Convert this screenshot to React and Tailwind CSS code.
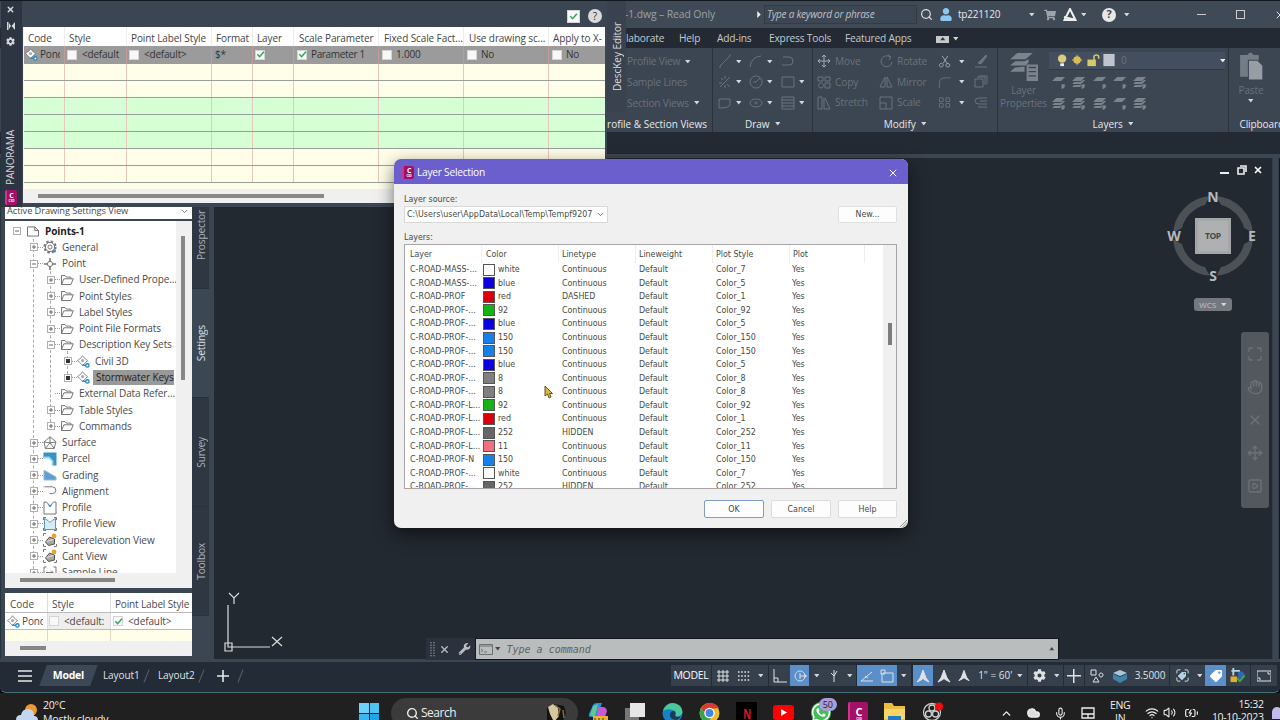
import {
  BatteryCharging,
  ChevronDown,
  ChevronUp,
  Cloud,
  Hand,
  Maximize,
  Mic,
  Move,
  Search,
  SquarePlay,
  Volume2,
  Wifi,
  X,
} from "lucide-react";
import { FaCog, FaShoppingCart, FaTag, FaUser, FaWhatsapp, FaWrench } from "react-icons/fa";

const DIALOG_ROWS = [
  ["C-ROAD-MASS-...", "white", "Continuous", "Color_7"],
  ["C-ROAD-MASS-...", "blue", "Continuous", "Color_5"],
  ["C-ROAD-PROF", "red", "DASHED", "Color_1"],
  ["C-ROAD-PROF-...", "92", "Continuous", "Color_92"],
  ["C-ROAD-PROF-...", "blue", "Continuous", "Color_5"],
  ["C-ROAD-PROF-...", "150", "Continuous", "Color_150"],
  ["C-ROAD-PROF-...", "150", "Continuous", "Color_150"],
  ["C-ROAD-PROF-...", "blue", "Continuous", "Color_5"],
  ["C-ROAD-PROF-...", "8", "Continuous", "Color_8"],
  ["C-ROAD-PROF-...", "8", "Continuous", "Color_8"],
  ["C-ROAD-PROF-L...", "92", "Continuous", "Color_92"],
  ["C-ROAD-PROF-L...", "red", "Continuous", "Color_1"],
  ["C-ROAD-PROF-L...", "252", "HIDDEN", "Color_252"],
  ["C-ROAD-PROF-L...", "11", "Continuous", "Color_11"],
  ["C-ROAD-PROF-N", "150", "Continuous", "Color_150"],
  ["C-ROAD-PROF-...", "white", "Continuous", "Color_7"],
  ["C-ROAD-PROF-...", "252", "HIDDEN", "Color_252"],
];

const SWATCHES = {
  white: "bg-white",
  blue: "bg-[#0a00e0]",
  red: "bg-[#dc0008]",
  92: "bg-[#14b414]",
  150: "bg-[#1482ea]",
  8: "bg-[#808080]",
  252: "bg-[#666666]",
  11: "bg-[#f07080]",
};

const TREE = [
  [1, "General", "+", "gear"],
  [1, "Point", "-", "point"],
  [2, "User-Defined Prope...", "+", "folder"],
  [2, "Point Styles", "+", "folder"],
  [2, "Label Styles", "+", "folder"],
  [2, "Point File Formats", "+", "folder"],
  [2, "Description Key Sets", "-", "folder"],
  [3, "Civil 3D", "o", "key"],
  [3, "Stormwater Keys", "o", "key"],
  [2, "External Data Refer...", "", "folder"],
  [2, "Table Styles", "+", "folder"],
  [2, "Commands", "+", "folder"],
  [1, "Surface", "+", "surface"],
  [1, "Parcel", "+", "parcel"],
  [1, "Grading", "+", "grading"],
  [1, "Alignment", "+", "alignment"],
  [1, "Profile", "+", "profile"],
  [1, "Profile View", "+", "profileView"],
  [1, "Superelevation View", "+", "section"],
  [1, "Cant View", "+", "section"],
  [1, "Sample Line", "+", "sample"],
];

const PANORAMA_COLUMNS = [
  ["Code", "w-[41px] pl-1"],
  ["Style", "w-[62px] pl-1"],
  ["Point Label Style", "w-[85px] pl-1"],
  ["Format", "w-[41px] pl-1"],
  ["Layer", "w-[41px] pl-1"],
  ["Scale Parameter", "w-[85px] pl-[5px]"],
  ["Fixed Scale Fact...", "w-[85px] pl-[5px]"],
  ["Use drawing sc...", "w-[85px] pl-[5px]"],
  ["Apply to X-", "w-[57px] pl-1"],
];

const PANORAMA_ROWS = [
  "bg-[#fffee8]",
  "bg-[#fffee8]",
  "bg-[#d6ffd6]",
  "bg-[#d6ffd6]",
  "bg-[#d6ffd6]",
  "bg-[#fffee8]",
  "bg-[#fffee8]",
];

function Caret({ className = "text-[#d5d8db]" }) {
  return (
    <svg viewBox="0 0 6 4" className={`h-[3.5px] w-[5.5px] shrink-0 ${className}`}>
      <path d="M0 0h6L3 4z" fill="currentColor" />
    </svg>
  );
}

function Civil({ className }) {
  return (
    <div
      className={`flex shrink-0 flex-col items-center justify-center rounded-[2px] border-l-2 border-[#d0348c] bg-[#a3106a] font-bold leading-none text-white ${className}`}
    >
      C<span className="text-[3px] leading-[4px]">C3D</span>
    </div>
  );
}

function Check({ on, className = "" }) {
  return (
    <span
      className={`flex h-[10px] w-[10px] shrink-0 items-center justify-center border border-[#d4d4d4] bg-[#f8f8f8] ${className}`}
    >
      {on && (
        <svg viewBox="0 0 10 10" className="h-[9px] w-[9px] shrink-0">
          <path d="M1.5 4.8 4 7.4 8.8 2" fill="none" stroke="#2fa65a" strokeWidth="1.7" />
        </svg>
      )}
    </span>
  );
}

function KeyIcon() {
  return (
    <svg viewBox="0 0 14 14" className="h-[13px] w-[13px] shrink-0">
      <path
        d="M4.5 3 6 .8 7.6 3 9.5 4.6 11.5 6 9.5 7.6 7.6 9.6 6 11.4 4.5 9.6 2.4 7.6.5 6l1.9-1.4z"
        fill="#fff"
        stroke="#777"
        strokeWidth=".9"
      />
      <circle cx="6" cy="6" r="1.7" fill="#aaa" />
      <circle cx="11.2" cy="11.2" r="1.8" fill="#fff" stroke="#2385c6" strokeWidth="1.4" />
      <path d="M5.5 11h4" stroke="#2385c6" strokeWidth="1.5" />
    </svg>
  );
}

function TreeIcon({ type }) {
  if (type === "key") return <KeyIcon />;
  return (
    <svg
      viewBox="0 0 14 14"
      className="h-[14px] w-[14px] shrink-0"
      fill="none"
      stroke="#777"
      strokeWidth="1"
    >
      {type === "folder" && (
        <path d="M1.5 11.5v-9h3.5l1.3 1.6h4.5v1.7M1.5 11.5l2.4-5.7h9.4l-2.4 5.7z" />
      )}
      {type === "gear" && (
        <>
          <circle cx="7" cy="7" r="5.6" strokeWidth="2" strokeDasharray="2.4 2" />
          <circle cx="7" cy="7" r="4.6" />
          <circle cx="7" cy="7" r="2" />
          <circle cx="11.5" cy="11" r="1.6" fill="#3d94cf" stroke="none" />
        </>
      )}
      {type === "point" && (
        <>
          <circle cx="7" cy="7" r="2.6" />
          <path d="M7 1v3.4M7 9.6V13M1 7h3.4M9.6 7H13" strokeWidth="1.6" />
        </>
      )}
      {type === "surface" && (
        <path d="m7 .8 6 5-1.800 6.600H2.400L1 6zM7 .8v6L1 6M7 6.800 13 6M7 6.800l-4.600 5.600M7 6.800l4.200 5.600" />
      )}
      {type === "parcel" && (
        <>
          <path d="M.5 .5h13v13H9.800V8.800L7 6H.5z" fill="#3793c0" stroke="none" />
          <path d="M.5 5.500h5.500l3.500 3.500v4.500" stroke="#9cd7ef" strokeWidth="1.8" />
        </>
      )}
      {type === "grading" && (
        <path d="M1 2.200 13 9v3H1z" fill="#609ccc" stroke="#8fbce0" />
      )}
      {type === "alignment" && <path d="M2 2.800h7.200q3.600 0 3.600 3.400t-3.600 3.400H6.600M.5 2.800h1" />}
      {type === "profile" && (
        <>
          <path d="M1 1h2.500L7 5l3.500-4H13v12H1z" />
          <path d="M5 3.200 7 6l2-2.800" stroke="#3d94cf" />
        </>
      )}
      {type === "profileView" && (
        <>
          <path d="M1.500 1.500 5 3.500l2 2 2-2 3.500-2v11h-11z" fill="#d5ebf5" stroke="#5d96b8" />
          <path d="M.5 3V.5H3M11 .5h2.500V3M.5 11v2.500H3M11 13.500h2.500V11" />
        </>
      )}
      {type === "section" && (
        <>
          <path d="M.5 3V.5H3M.5 11v2.500H3M11 13.500h2.500V11" />
          <path d="m2.500 9 4-5 5 2v5l-6 1.500z" fill="#a7a7a2" stroke="#57534c" />
          <path d="m3.500 8.500 7-2" stroke="#e8e7e3" />
          <circle cx="11" cy="2.900" r="2.400" fill="#e6a527" stroke="none" />
        </>
      )}
      {type === "sample" && (
        <path d="M3.500 1H1v12h2.500M10.500 1H13v12h-2.500M3 6.500h7M8 4.500l2 2-2 2" />
      )}
    </svg>
  );
}

function Expander({ kind }) {
  return (
    <svg viewBox="0 0 8 8" className="h-2 w-2 shrink-0">
      {kind && <rect x=".5" y=".5" width="7" height="7" fill="#fff" stroke="#b0b0b0" />}
      {kind === "o" ? (
        <rect x="2" y="2" width="4" height="4" fill="#333" />
      ) : (
        kind && <path d={kind === "+" ? "M2 4h4M4 2v4" : "M2 4h4"} stroke="#666" />
      )}
    </svg>
  );
}

function TreeRow({ row }) {
  const [level, label, expander, icon] = row;
  const indent = level === 1 ? "pl-[25px]" : level === 2 ? "pl-[42px]" : "pl-[59px]";
  const selected = label === "Stormwater Keys";
  return (
    <div className={`flex h-[16.28px] shrink-0 items-center ${indent}`}>
      <Expander kind={expander} />
      <span className="w-[5px] shrink-0 border-t border-dotted border-[#999]" />
      <TreeIcon type={icon} />
      <span
        className={`ml-[3px] h-[15px] whitespace-nowrap pl-[2px] leading-[15px] ${
          selected ? "w-[81px] bg-[#999] pl-[3px] text-[#222]" : ""
        }`}
      >
        {label}
      </span>
    </div>
  );
}

function ToolGlyph({ d, fill = "none", className = "h-[14px] w-[14px]" }) {
  return (
    <svg viewBox="0 0 14 14" className={`shrink-0 ${className}`} fill={fill} stroke="currentColor">
      <path d={d} />
    </svg>
  );
}

function RibbonPanel({ title, className, caret = true, align = "justify-center", children }) {
  return (
    <section className={`flex shrink-0 flex-col border-r border-[#2a323c] ${className}`}>
      <div className="h-[68px]">{children}</div>
      <div className={`flex h-[16px] items-center gap-[5px] whitespace-nowrap text-[10px] text-[#e6e9ec] ${align}`}>
        {title}
        {caret && <Caret />}
      </div>
    </section>
  );
}

const DRAW_TOOLS = [
  ["M2 12 12 2M1 13h2M11 1h2", "M1 13Q2 3 12 2", "M2 3h6q4 0 4 4t-4 4H1"],
  ["M2 12 12 2M3 3l2 2M7 1v3M1 8h3M9 9l3 3M7 10v3", "M7 1a6 6 0 1 0 .1 0M7 7l4-4M4 7h3", "M1 2h12v10H1z"],
  ["M1 3h11v5q0 4-11 4z", "M7 3a6 4 0 1 0 .1 0M7 6a1 1 0 1 0 .1 0", "M1 1h12v12H1zM1 4h12M1 7h12M1 10h12"],
];

const MODIFY_TOOLS = [
  ["M7 1v12M1 7h12M5 3l2-2 2 2M5 11l2 2 2-2M3 5 1 7l2 2M11 5l2 2-2 2", "Move", "M11 3a5.5 5.5 0 1 0 2 5M9 1l3 2-2 3", "Rotate", "M4 1l6 9M10 1 5 9M3 9a2 2 0 1 0 .1 0M10 9a2 2 0 1 0 .1 0", "M4 9 12 1l1 1-6 8zM1 13h12"],
  ["M1 2h5v4H1zM8 2h5v4H8zM4 8a2.5 2.5 0 1 0 .1 0M8 8h5v5H8z", "Copy", "M6 2v10H1zM8 2v10h5z", "Mirror", "M1 13V8q0-6 6-6h6", "M1 4h8v8H1zM3 2h8v8M5 1h8v8"],
  ["M1 1h4v12H1zM7 2v11h6L8 2", "Stretch", "M1 1h12v12H1zM1 7h6v6", "Scale", "M1 2h4v4H1zM8 2h4v4H8zM1 8h4v4H1zM8 8h4v4H8z", "M13 2H5Q1 2 1 5t4 3h8M13 5H6M13 11H4"],
];

function LayerGlyph({ index }) {
  return (
    <svg viewBox="0 0 14 14" className="h-[14px] w-[20.3px] shrink-0" fill="#7b838c">
      <path d="M4 2h9l-4 4H0z" />
      {index % 3 !== 0 && <path d="m2 7-2 2h9l4-4h-2L8 7zM2 10l-2 2h8l4-3h-2l-3 1z" />}
      <path d="M9 9h4v3l-2 2H9z" stroke="#3c4552" strokeWidth=".6" />
    </svg>
  );
}

function Ribbon() {
  return (
    <div className="flex h-[84px] shrink-0 bg-[#3c4552] pl-[609px] text-[#69727d]">
      <RibbonPanel title="Profile & Section Views" caret={false} align="justify-end pr-[5px]" className="w-[104px]">
        <div className="flex flex-col pl-[18px] pt-[3px] text-[10.2px] leading-[20.8px] tracking-[-0.2px] whitespace-nowrap">
          <div className="flex items-center gap-[5px]">Profile View <Caret /></div>
          <div>Sample Lines</div>
          <div className="flex items-center gap-[5px]">Section Views <Caret /></div>
        </div>
      </RibbonPanel>
      <RibbonPanel title="Draw" className="w-[100px]">
        <div className="pt-[3px] pl-[5px]">
          {DRAW_TOOLS.map((row, i) => (
            <div key={i} className="flex h-[20.8px] items-center">
              {row.map((d, j) => (
                <div key={j} className="flex w-[32.5px] items-center gap-[4px]">
                  <ToolGlyph d={d} />
                  {!(i === 0 && j === 2) && <Caret />}
                </div>
              ))}
            </div>
          ))}
        </div>
      </RibbonPanel>
      <RibbonPanel title="Modify" className="w-[185px]">
        <div className="pt-[3px] pl-[4px] text-[10.2px] tracking-[-0.15px]">
          {MODIFY_TOOLS.map((row, i) => (
            <div key={i} className="flex h-[20.8px] items-center">
              <ToolGlyph d={row[0]} className={i === 0 ? "h-[14px] w-[14px] text-[#a5abb2]" : "h-[14px] w-[14px]"} />
              <span className="ml-1 w-[44px]">{row[1]}</span>
              <ToolGlyph d={row[2]} />
              <span className="ml-1 w-[41px]">{row[3]}</span>
              <ToolGlyph d={row[4]} className={i === 0 ? "h-[13px] w-[14px] text-[#a5abb2]" : "h-[13px] w-[14px]"} />
              <span className="ml-[7px] w-[15px]"><Caret /></span>
              <ToolGlyph d={row[5]} fill={i === 0 ? "currentColor" : "none"} />
            </div>
          ))}
        </div>
      </RibbonPanel>
      <RibbonPanel title="Layers" className="w-[231px]">
        <div className="flex pt-1">
          <div className="flex w-[51px] shrink-0 flex-col items-center text-[10px] leading-[13px] tracking-[-0.15px]">
            <svg viewBox="0 0 28 28" className="h-[29px] w-[29px]" fill="#7b838c">
              <path d="M8 1h15l-7 6H1zM6 9l-5 4h15l3-3v-3l-4 2zM6 15l-5 4h14v-5zM17 12h11v16H17z" />
              <path d="M19 15h7M19 19h7M19 23h7" stroke="#3c4552" strokeWidth="1.3" />
            </svg>
            <span className="mt-[3px]">Layer</span>
            <span>Properties</span>
          </div>
          <div className="w-[176px]">
            <div className="flex h-[18px] items-center border-b border-[#2f3843] bg-[#434f5e] pl-[7px] text-[10px]">
              <svg viewBox="0 0 62 16" className="h-[15px] w-[61px]">
                <circle cx="5" cy="6" r="4.5" fill="#d9cc7f" />
                <path d="M3 11h4v3H3z" fill="#eee" />
                <circle cx="21" cy="7.5" r="4" fill="#d6bd55" />
                <path d="M21 2v11M15.500 7.500h11" stroke="#d6bd55" />
                <path d="M32 7h9v7h-9z" fill="#d6c968" />
                <path d="M39 8V4q0-2 2.500-2T44 4v2" fill="none" stroke="#d6c968" strokeWidth="1.6" />
                <path d="M49 1h12v13H49z" fill="#bdc4cf" />
              </svg>
              <span className="ml-1 grow">0</span>
              <Caret className="text-[#eee]" />
            </div>
            {[0, 1].map((r) => (
              <div key={r} className="flex h-[21px] items-center pt-[3px]">
                {[0, 1, 3, 3, 4].map((n, i) => (
                  <LayerGlyph key={i} index={r && i !== 3 ? 1 : n} />
                ))}
              </div>
            ))}
          </div>
        </div>
      </RibbonPanel>
      <div className="flex w-[52px] shrink-0 flex-col overflow-hidden pl-[10.500px] text-[10px] tracking-[-0.1px]">
        <div className="flex h-[68px] w-[23px] flex-col items-center pt-1">
          <svg viewBox="0 0 22 28" className="h-[29px] w-[23px] shrink-0" fill="#747c85">
            <path d="M0 3h7q3-5 6 0h5v21H0z" />
            <path d="M8 8h9l5 5v14H8z" fill="#969da4" stroke="#3c4552" />
          </svg>
          <span className="mb-[2px] mt-[3px] leading-[13px]">Paste</span>
          <Caret />
        </div>
        <span className="whitespace-nowrap leading-[16px] text-[#e6e9ec]">Clipboard</span>
      </div>
    </div>
  );
}

function TitleBar() {
  return (
    <div className="flex h-[28px] shrink-0 items-center border-t border-[#111820] bg-[#404a57] pl-[625px] text-[10px] text-[#e4e7ea] [&>*]:shrink-0">
      <span className="w-[132px] whitespace-nowrap text-[10.4px] text-[#9aa1a9] tracking-[-0.1px]">-1.dwg – Read Only</span>
      <svg viewBox="0 0 4 8" className="mr-[3px] h-[7px] w-[4px]">
        <path d="M0 0v8l4-4z" fill="#eee" />
      </svg>
      <div className="flex h-[19px] w-[153px] items-center border border-[#323b46] bg-[#3d4653] pl-[2px] whitespace-nowrap italic tracking-[-0.25px] text-[#bcc1c6]">
        Type a keyword or phrase
      </div>
      <Search className="ml-[3px] h-[13px] w-[13px] text-[#d8dbde]" strokeWidth={2.3} />
      <FaUser className="ml-[6px] h-[13px] w-[14px] text-[#8ac8ef]" />
      <span className="ml-[5px] w-[71px] tracking-[-0.2px]">tp221120</span>
      <Caret />
      <FaShoppingCart className="ml-[9px] h-[12px] w-[12px] text-[#9da3a9]" />
      <svg viewBox="0 0 14 14" className="ml-[7px] h-[14px] w-[14px]" fill="none" stroke="#eee" strokeWidth="2">
        <path d="M7 1 1.500 12h11zM1 9l12 3" />
      </svg>
      <span className="ml-[4px]"><Caret /></span>
      <span className="ml-[16px] flex h-[14px] w-[14px] items-center justify-center rounded-full bg-[#e8e8e8] text-[11px] font-bold text-[#444b54]">?</span>
      <span className="ml-[8px]"><Caret /></span>
      <span className="ml-[67px] h-[1.5px] w-[9px] bg-[#ccc]" />
      <span className="ml-[30px] h-[9px] w-[9px] border-[1.5px] border-[#ccc]" />
      <X className="ml-[29px] h-3 w-3" />
    </div>
  );
}

function Panorama() {
  return (
    <div className="absolute left-px top-px flex h-[206px] w-[625px] text-[10px]">
      <div className="flex w-[21px] shrink-0 flex-col items-center bg-[#2e3542] pr-[2px] text-[#d4d7da]">
        <X className="mt-[4px] h-[9px] w-[9px] shrink-0" strokeWidth={4} />
        <svg viewBox="0 0 8 8" className="mt-[8px] h-[8px] w-[8px] shrink-0" fill="#d4d7da">
          <path d="M0 0h1.500v8H0zM8 0v8L4.500 4zM2 1l2 3-2 3z" />
        </svg>
        <FaCog className="mt-[7px] h-[9px] w-[9px] shrink-0" />
        <span className="mt-[79px] h-[60px] shrink-0 rotate-180 text-[10.2px] leading-[15px] tracking-[-0.2px] [writing-mode:vertical-rl]">
          PANORAMA
        </span>
        <Civil className="mt-[5px] h-[15px] w-[12px] text-[7px]" />
      </div>
      <div className="flex w-[585px] shrink-0 flex-col bg-[#3c4552] pb-[4px] pl-px pr-[2px]">
        <div className="flex h-[26px] shrink-0 items-center justify-end pt-[4px] pr-[3px]">
          <Check on className="h-[13px] w-[13px]" />
          <span className="ml-2 flex h-[14px] w-[14px] items-center justify-center rounded-full bg-[#d8dadb] text-[10px] text-[#333]">?</span>
        </div>
        <div className="flex grow flex-col overflow-hidden bg-[#f0f0f0] pl-px text-[#444]">
          <div className="flex h-[19px] shrink-0 bg-white">
            {PANORAMA_COLUMNS.map(([label, cell]) => (
              <span key={label} className={`shrink-0 overflow-hidden whitespace-nowrap border-r border-[#eee] leading-[22px] tracking-[-0.1px] ${cell}`}>
                {label}
              </span>
            ))}
          </div>
          <div className="flex h-[18px] shrink-0 items-center bg-[#9b9b9b] text-[10px] tracking-[-0.2px] text-[#333] whitespace-nowrap [&>*]:border-[#c29a9a] [&>*]:pb-px">
            <div className="flex h-full w-[41px] shrink-0 items-center overflow-hidden border-r pl-[1px]">
              <KeyIcon /><span className="ml-[2px] w-[20px] overflow-hidden">Pond</span>
            </div>
            <div className="flex h-full w-[62px] shrink-0 items-center gap-[5px] overflow-hidden border-r pl-[2px]"><Check />&lt;default</div>
            <div className="flex h-full w-[85px] shrink-0 items-center gap-[5px] border-r pl-[2px]"><Check />&lt;default&gt;</div>
            <div className="flex h-full w-[41px] shrink-0 items-center border-r pl-[3px]">$*</div>
            <div className="flex h-full w-[41px] shrink-0 items-center border-r pl-[2px]"><Check on /></div>
            <div className="flex h-full w-[85px] shrink-0 items-center gap-[4px] border-r pl-[3px] tracking-[-0.35px]"><Check on />Parameter 1</div>
            <div className="flex h-full w-[85px] shrink-0 items-center gap-[4px] border-r pl-[3px]"><Check />1.000</div>
            <div className="flex h-full w-[85px] shrink-0 items-center gap-[4px] border-r pl-[3px]"><Check />No</div>
            <div className="flex h-full w-[57px] shrink-0 items-center gap-[4px] pl-[3px]"><Check />No</div>
          </div>
          {PANORAMA_ROWS.map((bg, i) => (
            <div key={i} className={`flex h-[17px] shrink-0 border-b border-[#999f99] ${bg}`}>
              {PANORAMA_COLUMNS.map(([label, cell]) => (
                <span key={label} className={`shrink-0 border-r border-[#e5c9bd] ${cell}`} />
              ))}
            </div>
          ))}
          <div className="h-[6px] shrink-0 bg-[#fffee8]" />
          <div className="ml-[14px] mt-[5px] h-[4px] w-[286px] shrink-0 bg-[#888]" />
        </div>
      </div>
      <div className="flex h-[111px] w-[19px] items-center justify-center bg-[#39424e] text-[#d9dcdf]">
        <span className="rotate-180 whitespace-nowrap text-[10px] leading-[14px] tracking-[-0.05px] [writing-mode:vertical-rl]">DescKey Editor</span>
      </div>
    </div>
  );
}

const SIDE_TABS = [
  ["Prospector", "h-[82px] items-start pt-[3px]", false],
  ["Settings", "h-[109px] items-center", true],
  ["Survey", "h-[109px] items-center", false],
  ["Toolbox", "h-[109px] items-center", false],
];

function Toolspace() {
  return (
    <aside className="flex w-[214px] shrink-0 border-l border-[#23343c] bg-[#3c4552] pl-[4px] pt-[49px] text-[#4a4a4a]">
      <div className="flex w-[187px] shrink-0 flex-col">
        <div className="flex h-[12px] shrink-0 items-center justify-between bg-white pb-[4px] pl-[2px] pr-[3px] text-[9.3px] leading-none tracking-[-0.1px]">
          Active Drawing Settings View
          <ChevronDown className="h-[9px] w-[9px]" />
        </div>
        <div className="mt-[2px] flex h-[367px] flex-col bg-[#f0f0f0]">
          <div className="flex h-[352px] shrink-0">
            <div className="relative flex w-[171px] flex-col overflow-hidden bg-white pt-[2px] text-[10px] tracking-[-0.1px]">
              <span className="absolute left-[28px] top-[18px] h-[340px] border-l border-dashed border-[#aaa]" />
              <span className="absolute left-[45px] top-[50px] h-[156px] border-l border-dashed border-[#aaa]" />
              <span className="absolute left-[62px] top-[130px] h-[28px] border-l border-dashed border-[#aaa]" />
              <div className="relative flex h-[16.28px] shrink-0 items-center pl-[8px] font-bold text-[#222]">
                <Expander kind="-" />
                <svg viewBox="0 0 14 12" className="ml-[5px] mr-[5px] h-[11px] w-[14px]" fill="none" stroke="#666">
                  <path d="M1 1h8l4 4v6H1zM9 1v4h4" />
                </svg>
                Points-1
              </div>
              <div className="relative flex flex-col">
                {TREE.map((row) => (
                  <TreeRow key={row[1]} row={row} />
                ))}
              </div>
            </div>
            <div className="ml-[5px] mt-[15px] h-[144px] w-[4px] bg-[#888]" />
          </div>
          <div className="ml-[15px] mt-[5px] h-[4px] w-[95px] bg-[#868686]" />
        </div>
        <div className="mt-[5px] flex h-[63px] flex-col bg-[#f0f0f0] text-[10px] whitespace-nowrap">
          <div className="flex h-[20px] shrink-0 border-b border-[#bbb] bg-white leading-[22px]">
            <span className="w-[43px] border-r border-[#ddd] pl-[5px]">Code</span>
            <span className="w-[63px] border-r border-[#ddd] pl-[4px]">Style</span>
            <span className="pl-[4px] tracking-[-0.15px]">Point Label Style</span>
          </div>
          <div className="flex h-[17px] shrink-0 border-b border-[#bbb] bg-white text-[10px] tracking-[-0.1px]">
            <span className="flex w-[43px] items-center overflow-hidden border-r border-[#ddd] pl-[2px]">
              <KeyIcon /><span className="ml-[2px] w-[21px] overflow-hidden">Pond</span>
            </span>
            <span className="flex w-[63px] items-center gap-[5px] overflow-hidden border-r border-[#ddd] bg-[#eee] pl-[1px]">
              <Check className="border-[#aaa]" />&lt;default:
            </span>
            <span className="flex items-center gap-[5px] pl-[2px]"><Check on className="border-[#8a8]" />&lt;default&gt;</span>
          </div>
          <div className="flex h-[11px] shrink-0 bg-[#fffee8]">
            <span className="w-[43px] border-r border-[#e5d5c9]" />
            <span className="w-[63px] border-r border-[#e5d5c9]" />
          </div>
          <div className="ml-[15px] mt-[5px] h-[4px] w-[26px] bg-[#868686]" />
        </div>
      </div>
      <div className="flex w-[17px] shrink-0 flex-col text-[10.200px] tracking-[-0.2px] text-[#aab0b7]">
        {SIDE_TABS.map(([label, size, active]) => (
          <span
            key={label}
            className={`flex justify-center border-b border-[#29313c] ${size} ${
              active ? "bg-[#3c4754] text-[#dde0e3]" : "bg-[#2f3743]"
            }`}
          >
            <span className="rotate-180 leading-[16px] [writing-mode:vertical-rl]">{label}</span>
          </span>
        ))}
      </div>
    </aside>
  );
}

function LayerDialog() {
  return (
    <div className="absolute left-[394px] top-[159px] flex h-[369px] w-[514px] flex-col overflow-hidden rounded-[7px] bg-[#f0f0f0] font-['DejaVu_Sans_Condensed','DejaVu_Sans',sans-serif] text-[8.8px] text-[#454a45] shadow-[0_6px_18px_rgba(0,0,0,0.55)]">
      <div className="flex h-[25px] shrink-0 items-center bg-[#6b5fce] pl-[8px] pr-[9px] pt-[2px] font-['Open_Sans',sans-serif] text-[10.200px] tracking-[-0.25px] text-white">
        <Civil className="mr-[3px] h-[13px] w-[12px] text-[7px]" />
        <span className="grow">Layer Selection</span>
        <X className="h-3 w-3" strokeWidth={2} />
      </div>
      <div className="flex grow flex-col pl-[10px] pr-[11px]">
        <span className="mt-[9px] leading-[12px]">Layer source:</span>
        <div className="mt-px flex justify-between">
          <div className="flex h-[17px] w-[204px] items-center justify-between border border-[#d8d8d8] bg-white pl-[2px] pr-[2px]">
            <span className="w-[187px] overflow-hidden whitespace-nowrap tracking-[0.05px]">C:\Users\user\AppData\Local\Temp\Tempf9207</span>
            <ChevronDown className="h-[9px] w-[9px] shrink-0" />
          </div>
          <div className="flex h-[17px] w-[59px] items-center justify-center rounded-[2px] border border-[#e0e0e0] bg-[#fdfdfd]">New...</div>
        </div>
        <span className="mt-[8px] leading-[12px]">Layers:</span>
        <div className="mt-px flex h-[245px] border border-[#a8a4a8] bg-white">
          <div className="flex w-[478px] flex-col overflow-hidden pl-[5px]">
            <div className="flex h-[18px] shrink-0 leading-[18px] [&>span]:border-r [&>span]:border-[#eee]">
              <span className="w-[72px]">Layer</span>
              <span className="w-[77px] pl-[4px]">Color</span>
              <span className="w-[77px] pl-[3px]">Linetype</span>
              <span className="w-[77px] pl-[3px]">Lineweight</span>
              <span className="w-[77px] pl-[3px]">Plot Style</span>
              <span className="w-[75px] pl-[3px]">Plot</span>
            </div>
            {DIALOG_ROWS.map(([layer, color, linetype, style], i) => (
              <div key={i} className="flex h-[13.57px] shrink-0 items-center whitespace-nowrap">
                <span className="w-[73px]">{layer}</span>
                <span className={`h-[12px] w-[12px] shrink-0 border border-[#555] ${SWATCHES[color]}`} />
                <span className="w-[67px] pl-[3px]">{color}</span>
                <span className="w-[77px]">{linetype}</span>
                <span className="w-[77px]">Default</span>
                <span className="w-[76px]">{style}</span>
                <span>Yes</span>
              </div>
            ))}
          </div>
          <div className="flex grow justify-center bg-[#f0f0f0]">
            <span className="mt-[78px] h-[22px] w-[4px] bg-[#7c7c7c]" />
          </div>
        </div>
        <div className="mt-[11px] flex justify-end gap-[7px] [&>div]:pt-px">
          <div className="flex h-[18px] w-[60px] items-center justify-center rounded-[2px] border border-[#7f9dc4] bg-[#fdfdfd]">OK</div>
          <div className="flex h-[18px] w-[60px] items-center justify-center rounded-[2px] border border-[#dcdcdc] bg-[#fdfdfd]">Cancel</div>
          <div className="flex h-[18px] w-[59px] items-center justify-center rounded-[2px] border border-[#dcdcdc] bg-[#fdfdfd]">Help</div>
        </div>
      </div>
      <svg viewBox="0 0 10 10" className="absolute bottom-0 right-0 h-[9px] w-[9px]">
        <path d="m1 9 8-8M4 9l5-5M7 9l2-2" stroke="#888" />
      </svg>
      <svg viewBox="0 0 9 14" className="absolute left-[150px] top-[226px] h-[14px] w-[9px]">
        <path d="M1 1v10l2.500-2L5 13l2-1-1.500-3.500H8.500z" fill="#dcb93c" stroke="#665126" />
      </svg>
    </div>
  );
}

function ViewCube() {
  return (
    <div className="absolute left-[1164px] top-[187px] flex w-[98px] flex-col items-center font-bold text-[#aeb1b3]">
      <svg viewBox="0 0 98 98" className="h-[98px] w-[98px]">
        <circle cx="49" cy="49" r="36" fill="none" stroke="#4c5156" strokeWidth="8" />
        <path d="M49 3 57 18H41zM49 95l8-15H41zM3 49l15-8v16zM95 49l-15-8v16z" fill="#22282f" />
        <rect x="31" y="31" width="36" height="36" fill="#a4a6a7" />
        <rect x="34" y="34" width="30" height="30" fill="#aeb0b1" />
        <g fill="#b6b8ba" textAnchor="middle" fontSize="14" fontFamily="Open Sans" fontWeight="700">
          <text x="49" y="15">N</text>
          <text x="49" y="94">S</text>
          <text x="10" y="54">W</text>
          <text x="88" y="54">E</text>
          <text x="49" y="52" fill="#44484c" fontSize="8.500" textLength="16">TOP</text>
        </g>
      </svg>
      <div className="mt-[13px] flex h-[13px] w-[38px] items-center justify-center gap-[5px] rounded-[3px] bg-[#74797f] text-[8px] font-normal text-[#c0c4c7]">
        WCS <Caret />
      </div>
    </div>
  );
}

function CommandLine() {
  return (
    <div className="absolute left-[426px] top-[638px] flex h-[22px] w-[633px] items-center bg-[#2b323d] text-[#b8bcc0]">
      <svg viewBox="0 0 5 15" className="ml-[4px] h-[15px] w-[5px]" stroke="#aaa" strokeDasharray="1.3 1.3">
        <path d="M1 0v15M4 0v15" />
      </svg>
      <X className="ml-[4px] h-[11px] w-[11px]" strokeWidth={3} />
      <FaWrench className="ml-[8px] h-[12px] w-[13px] -scale-x-100 rotate-90" />
      <div className="ml-[4px] flex h-full grow items-center border border-[#15191f] bg-[#babdbe] pl-[3px] pr-[4px] text-[#5d6265]">
        <svg viewBox="0 0 14 11" className="h-[11px] w-[14px]" fill="none" stroke="#6c7174">
          <path d="M.5.5h13v10H.5zM0 2h14M2 5l2 1.500L2 8M5 8h3" />
        </svg>
        <Caret className="ml-[2px] text-[#444]" />
        <span className="ml-[6px] grow font-['DejaVu_Sans_Mono',monospace] text-[10px] italic">Type a command</span>
        <Caret className="rotate-180 text-[#444]" />
      </div>
    </div>
  );
}

function DrawingArea() {
  return (
    <main className="flex grow border-r border-[#111820] bg-[#222930]">
      <div className="grow" />
      <div className="w-[7px] border-l border-r border-[#333c48] bg-[#3c4552]" />
    </main>
  );
}

function Cell({ className = "", active, children }) {
  return (
    <span
      className={`flex h-[21px] shrink-0 items-center justify-center ${
        active ? "bg-[#5b8fc9]" : "bg-[#36404c]"
      } ${className}`}
    >
      {children}
    </span>
  );
}

const PERSON = "M7 1 8.500 5 10 9l3 4-4-2-2-1.500L5 11l-4 2 3-4 1.500-4z";

function StatusBar() {
  return (
    <div className="flex h-[31px] shrink-0 items-center rounded-b-[6px] border-b border-[#427076] bg-[#232c36] pb-[3px] pl-[18px] text-[10px] text-[#dfe2e5]">
      <div className="flex w-[653px] shrink-0 items-center">
        <svg viewBox="0 0 14 12" className="h-[12px] w-[14px]" stroke="#e6e8ea" strokeWidth="1.7">
          <path d="M0 1h14M0 6h14M0 11h14" />
        </svg>
        <span className="ml-[11px] flex h-[21px] w-[51px] -skew-x-[20deg] items-center justify-center bg-[#3c4856]">
          <b className="skew-x-[20deg] text-[10.500px] tracking-[-0.300px] text-white">Model</b>
        </span>
        <span className="ml-[9px] w-[43px] tracking-[-0.1px]">Layout1</span>
        <span className="h-[14px] w-px rotate-[22deg] bg-[#56606b]" />
        <span className="ml-[11px] w-[43px] tracking-[-0.1px]">Layout2</span>
        <span className="h-[14px] w-px rotate-[22deg] bg-[#56606b]" />
        <svg viewBox="0 0 12 12" className="ml-[15px] h-[12px] w-[12px]" stroke="#e6e8ea" strokeWidth="1.6">
          <path d="M6 0v12M0 6h12" />
        </svg>
        <span className="ml-[11px] h-[14px] w-px rotate-[22deg] bg-[#56606b]" />
      </div>
      <Cell className="w-[40px] text-[10.500px] tracking-[-0.300px] text-white">MODEL</Cell>
      <Cell className="ml-px w-[22px]"><ToolGlyph d="M1 3h12M1 7h12M1 11h12M3 1v12M7 1v12M11 1v12" /></Cell>
      <Cell className="w-[19px]">
        <svg viewBox="0 0 12 12" className="h-[12px] w-[12px]" stroke="currentColor" strokeWidth="1.6" strokeDasharray="1.6 1.6">
          <path d="M0 2h12M0 6h12M0 10h12" />
        </svg>
      </Cell>
      <Cell className="w-[15px]"><Caret /></Cell>
      <Cell className="ml-px w-[21px]"><ToolGlyph d="M1 0v13h13M1 9h4v4" /></Cell>
      <Cell active className="w-[19px]"><ToolGlyph d="M7 2a5 5 0 1 0 .1 0M7 7h7M7 4v6M11 5l2 2-2 2" /></Cell>
      <Cell className="w-[15px]"><Caret /></Cell>
      <Cell className="w-[20px]"><ToolGlyph d="M7 1v12M7 7l3-5M7 7 4 4" /></Cell>
      <Cell className="w-[12px]"><Caret /></Cell>
      <Cell active className="ml-px w-[20px]"><ToolGlyph d="M1 12 12 3M1 12h12M5 7l3 2" /></Cell>
      <Cell active className="w-[20px]"><ToolGlyph d="M3 4h10v9H2V4M1 1h4v4H1z" /></Cell>
      <Cell className="w-[14px]"><Caret /></Cell>
      <Cell active className="ml-[2px] w-[20px]"><ToolGlyph fill="currentColor" d={PERSON} /></Cell>
      <Cell className="w-[21px]"><ToolGlyph fill="currentColor" d={PERSON} /></Cell>
      <Cell className="w-[20px]"><ToolGlyph fill="currentColor" d={PERSON} className="h-[13px] w-[12px]" /></Cell>
      <Cell className="w-[53px] gap-[5px] whitespace-nowrap">1" = 60' <Caret /></Cell>
      <Cell className="ml-px w-[22px]"><FaCog className="h-[13px] w-[13px]" /></Cell>
      <Cell className="w-[13px]"><Caret /></Cell>
      <Cell className="ml-px w-[20px]"><ToolGlyph d="M7 0v14M0 7h14M6.500 0v14M0 6.500h14" /></Cell>
      <Cell className="ml-px w-[24px]"><ToolGlyph d="M1 1h5v5H1zM11 4a2 2 0 1 0 .1 0M6 8l3 5H3z" /></Cell>
      <Cell className="w-[22px]">
        <svg viewBox="0 0 14 14" className="h-[14px] w-[14px]">
          <path d="M7 1 0 4l7 3 7-3z" fill="#a9c9da" />
          <path d="M0 5v5l7 4 7-4V5L7 8z" fill="#3f85ab" />
        </svg>
      </Cell>
      <Cell className="w-[38px] tracking-[-0.1px]">3.5000</Cell>
      <Cell className="ml-px w-[24px]">
        <span className="relative flex h-[14px] w-[14px] items-center justify-center">
          <Maximize className="absolute h-[15px] w-[15px]" strokeWidth={1.500} />
          <FaTag className="h-[8px] w-[8px] rotate-90 text-[#b5d3e4]" />
        </span>
      </Cell>
      <Cell className="w-[11px]"><Caret /></Cell>
      <Cell active className="w-[21px]"><FaTag className="h-[12px] w-[12px] rotate-90 text-white" /></Cell>
      <Cell className="w-[24px]">
        <svg viewBox="0 0 16 16" className="h-[15px] w-[16px]">
          <path d="M8 4a5 5 0 0 1 7 6l-7 2z" fill="#2d69b0" />
          <path d="M1 3h9M3 0v8" stroke="#b9d4e6" strokeWidth="2" />
          <path d="M0 9h7v6H0z" fill="#e0ad32" />
          <path d="m7 11 3 3 5-6" fill="none" stroke="#45a845" strokeWidth="2" />
        </svg>
      </Cell>
      <Cell className="ml-px w-[26px]"><ToolGlyph d="M0 2h14v10H0zM2 10V8M2 10h2M12 4h-2M12 4v2" /></Cell>
    </div>
  );
}

function Taskbar() {
  return (
    <div className="flex h-[27px] shrink-0 items-start overflow-hidden bg-[#202020] pl-[15px] pt-[5px] text-[10.5px] text-[#eee]">
      <svg viewBox="0 0 24 22" className="mt-[5px] h-[22px] w-[24px] shrink-0">
        <circle cx="16" cy="7" r="6" fill="#e99a32" />
        <path d="M6 22q-5 0-5-5t5-5q1-6 7-6t6 7q4 0 4 4.500t-5 4.500z" fill="#c3d6ef" />
      </svg>
      <div className="ml-[4px] w-[316px] shrink-0 whitespace-nowrap leading-[14px]">
        <div className="tracking-[-0.2px]">20°C</div>
        <div className="tracking-[-0.15px]">Mostly cloudy</div>
      </div>
      <div className="mt-[5px] grid h-[20px] w-[20px] shrink-0 grid-cols-2 gap-px">
        <i className="bg-[#6bd3f7]" /><i className="bg-[#4cc4f2]" /><i className="bg-[#37b7ef]" /><i className="bg-[#20a4e8]" />
      </div>
      <div className="ml-[12px] flex h-[30px] w-[187px] shrink-0 items-center rounded-full bg-[#3b3b3b] pl-[15px] text-[12px]">
        <Search className="h-[13px] w-[13px]" strokeWidth={2.6} />
        <span className="ml-px grow pl-px tracking-[-0.500px]">Search</span>
        <svg viewBox="0 0 22 22" className="mr-[11px] h-[22px] w-[22px]">
          <path d="M2 22V6l7-4 10 2 2 7-4 11z" fill="#151310" />
          <path d="m3 5 5-3 5 4 1 8-5 6-4-8z" fill="#d7c7a0" />
          <path d="m10 3 5 4-2 7M18 8l1 8" stroke="#8d6840" strokeWidth="1.5" fill="none" />
        </svg>
      </div>
      <div className="flex shrink-0 items-start gap-[16.3px] pl-[9px] pt-[4px]">
        <svg viewBox="0 0 21 22" className="h-[22px] w-[21px]">
          <path d="M2 12 6 3q1-2 4-2h5l-5 14H4q-3 0-2-3z" fill="#2b8fdb" />
          <path d="M3 13 6 4l5-2-3 13z" fill="#5ac994" />
          <path d="M11 5h5q3 0 4 4l-2 6h-8z" fill="#c75bd6" />
          <path d="M6 14h15v8H6z" fill="#e9b338" />
          <path d="M8 16v5M12 16v5M16 16v5" stroke="#473107" />
        </svg>
        <svg viewBox="0 0 21 22" className="h-[22px] w-[21px]">
          <path d="M1 6h14v14H1z" fill="#777" />
          <path d="M6 1h15v14H6z" fill="#e6e6e6" />
        </svg>
        <svg viewBox="0 0 21 22" className="h-[22px] w-[21px]">
          <circle cx="10.500" cy="11" r="10" fill="#1583c9" />
          <path d="M1 9Q4 1 11 1q9 1 9.500 9-1 5-7 4 2-5-3-6Q5 6 1 9z" fill="#4bc899" />
          <path d="M8 13q0-4 4-4 2 1 1 5 3 2 6 0-2 4-6 4-5-1-5-5z" fill="#1d3c50" />
        </svg>
        <svg viewBox="0 0 21 22" className="h-[22px] w-[21px]">
          <circle cx="10.500" cy="11" r="10" fill="#ecbe2a" />
          <path d="M2 6q4-5 9-5 6 0 9 5l-9 1-4 6z" fill="#da3b31" />
          <path d="M2 6Q-2 15 7 20l3 1 2-7-5-1z" fill="#37a44f" />
          <circle cx="10.500" cy="11" r="4.600" fill="#4285e8" stroke="#fff" strokeWidth="1.300" />
        </svg>
        <span className="flex h-[22px] w-[21px] items-center justify-center bg-black text-[15px] font-bold text-[#d11c26]">
          <span className="scale-x-[0.650]">N</span>
        </span>
        <svg viewBox="0 0 21 22" className="h-[22px] w-[21px]">
          <rect y="3" width="21" height="15" rx="3" fill="#f00" />
          <path d="m8 7 6 3.500L8 14z" fill="#fff" />
        </svg>
        <div className="relative h-[22px] w-[21px]">
          <span className="flex h-[21px] w-[20px] items-center justify-center rounded-full bg-[#43bb57]">
            <FaWhatsapp className="h-[21px] w-[21px] text-white" />
          </span>
          <span className="absolute left-[8px] top-[-4px] flex h-[13px] w-[18px] items-center justify-center rounded-full bg-[#a99ddc] text-[9px] text-[#222]">50</span>
        </div>
        <Civil className="h-[22px] w-[20px] text-[11px]" />
        <svg viewBox="0 0 21 22" className="h-[22px] w-[21px]">
          <path d="M0 1h8l2 3h11v18H0z" fill="#e9be45" />
          <path d="M0 7h21v10H0z" fill="#f8d568" />
          <path d="M4 14h13v8H4z" fill="#287abe" />
        </svg>
        <svg viewBox="0 0 21 22" className="h-[22px] w-[21px]" fill="none" stroke="#ccc" strokeWidth="1.300">
          <circle cx="10" cy="10" r="8.500" />
          <circle cx="10" cy="6" r="3" />
          <circle cx="6.500" cy="12" r="3" />
          <circle cx="13.500" cy="12" r="3" />
          <circle cx="17" cy="4.500" r="4" fill="#f20c0c" stroke="none" />
        </svg>
      </div>
      <div className="ml-[57px] flex shrink-0 items-center pt-[8px]">
        <ChevronUp className="h-[13px] w-[13px]" strokeWidth={2.6} />
        <Cloud className="ml-[13px] h-[14px] w-[15px] fill-[#ddd]" />
        <Mic className="ml-[13px] h-[13px] w-[13px]" />
        <svg viewBox="0 0 14 12" className="ml-[14px] h-[12px] w-[14px]" fill="none" stroke="#eee" strokeWidth="1.300">
          <path d="M1 1h12v10H1zM1 7h12M7 7v4" />
        </svg>
      </div>
      <div className="ml-[14px] w-[23px] shrink-0 text-center leading-[13px] tracking-[-0.3px]">
        <div className="pt-px">ENG</div>
        <div>IN</div>
      </div>
      <Wifi className="ml-[13px] mt-[8px] h-[14px] w-[14px] shrink-0" />
      <Volume2 className="ml-[4px] mt-[8px] h-[13px] w-[13px] shrink-0" />
      <BatteryCharging className="ml-[8px] mt-[8px] h-[14px] w-[15px] shrink-0" />
      <div className="ml-[9px] w-[56px] shrink-0 text-right leading-[13px] tracking-[-0.3px] whitespace-nowrap">
        <div>15:32</div>
        <div>10-10-2023</div>
      </div>
      <i className="ml-[8px] mt-[9px] h-[12px] w-[10px] shrink-0 rounded-t-full bg-[#c5bbea]" />
    </div>
  );
}

export default function App() {
  return (
    <div className="relative flex h-[720px] w-[1280px] flex-col overflow-hidden bg-black font-['Open_Sans','Noto_Sans',sans-serif]">
      <TitleBar />
      <nav className="flex h-[20px] shrink-0 items-center bg-[#232a33] pl-[626px] pt-[2px] text-[10.2px] tracking-[-0.2px] text-[#c5c9cd] whitespace-nowrap">
        <span className="w-[53px]">laborate</span>
        <span className="w-[38px]">Help</span>
        <span className="w-[52px]">Add-ins</span>
        <span className="w-[76px]">Express Tools</span>
        <span className="w-[91px]">Featured Apps</span>
        <span className="mr-[4px] flex h-[7px] w-[13px] items-center justify-center bg-[#c6c9cc]">
          <Caret className="rotate-180 text-[#333]" />
        </span>
        <Caret />
      </nav>
      <Ribbon />
      <div className="h-[22px] shrink-0 bg-[#232a33]" />
      <div className="h-[4px] shrink-0 bg-[#3c4552]" />
      <div className="flex h-[503px] shrink-0">
        <Toolspace />
        <DrawingArea />
      </div>
      <div className="-mt-[2px] h-[3px] shrink-0 bg-[#3c4552]" />
      <StatusBar />
      <Taskbar />

      <svg viewBox="0 0 62 64" className="absolute left-[222px] top-[589px] h-[64px] w-[64px]" fill="none" stroke="#dcdcdc" strokeWidth="1.200">
        <path d="M5 16v42h42M2 54h7v8H2zM6 4l5 5 5-5M11 9v6M49 48l10 9M59 48l-10 9" />
      </svg>
      <div className="absolute left-[1220px] top-[165px] flex items-center gap-[8px] text-white">
        <span className="mt-[6px] h-[2px] w-[9px] bg-[#eee]" />
        <svg viewBox="0 0 10 10" className="h-[10px] w-[10px]" fill="none" stroke="#eee" strokeWidth="1.600">
          <path d="M1 3h6v6H1zM3 1h6v6" />
        </svg>
        <X className="-ml-[2px] h-[10px] w-[10px]" strokeWidth={4} />
      </div>
      <ViewCube />
      <div className="absolute left-[1241px] top-[332px] flex h-[176px] w-[28px] flex-col items-center justify-between rounded-[3px] bg-[#53585e] py-[14px] text-[#6d7278]">
        <Maximize className="h-4 w-4" />
        <Hand className="h-4 w-4" />
        <X className="h-4 w-4" />
        <Move className="h-4 w-4" />
        <SquarePlay className="h-4 w-4" />
      </div>
      <CommandLine />
      <Panorama />
      <LayerDialog />
    </div>
  );
}
